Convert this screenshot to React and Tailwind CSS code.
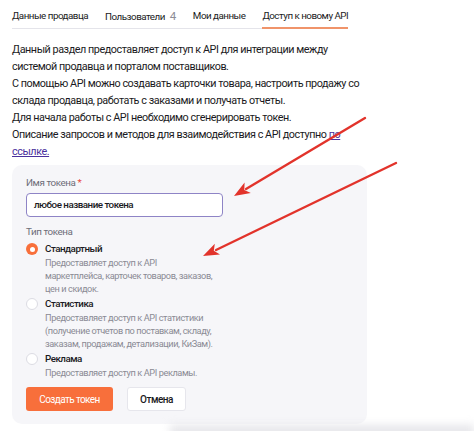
import React from 'react';

const tabs = [
  { label: 'Данные продавца' },
  { label: 'Пользователи', count: 4 },
  { label: 'Мои данные' },
  { label: 'Доступ к новому API', active: true },
];

const tokenTypes = [
  {
    title: 'Стандартный',
    lines: ['Предоставляет доступ к API', 'маркетплейса, карточек товаров, заказов,', 'цен и скидок.'],
    checked: true,
  },
  {
    title: 'Статистика',
    lines: ['Предоставляет доступ к API статистики', '(получение отчетов по поставкам, складу,', 'заказам, продажам, детализации, КиЗам).'],
  },
  {
    title: 'Реклама',
    lines: ['Предоставляет доступ к API рекламы.'],
  },
];

const Radio = ({ checked }) =>
  checked ? (
    <span className="flex h-[12px] w-[12px] shrink-0 items-center justify-center rounded-full bg-[#f86f3b]">
      <span className="block h-[5px] w-[5px] rounded-full bg-white" />
    </span>
  ) : (
    <span className="block h-[12px] w-[12px] shrink-0 rounded-full border border-[#dcdce3] bg-white" />
  );

const Arrows = () => (
  <svg className="pointer-events-none absolute inset-0" width="474" height="431" viewBox="0 0 474 431">
    <g stroke="#e2332b" strokeWidth="2.4" strokeLinecap="round">
      <line x1="365" y1="118" x2="246" y2="189" />
      <line x1="396" y1="163" x2="216" y2="250" />
    </g>
    <g fill="#e2332b">
      <polygon points="234,196 250.8,193 244.3,189.9 244.6,182.6" />
      <polygon points="203,256 220,254.5 213.8,250.8 214.8,243.7" />
    </g>
  </svg>
);

export default function App() {
  return (
    <div className="relative h-[431px] w-[474px] overflow-hidden bg-white px-3 font-['Roboto','Noto_Sans',sans-serif] text-[#1a1a22]">
      {/* Tabs */}
      <div className="inline-flex gap-[17px] border-b border-[#e4e4ea] pt-[8px] text-[9.8px] leading-[16px] tracking-[-0.5px]">
        {tabs.map((t) => (
          <div
            key={t.label}
            className={`pb-[3px] ${t.active ? '-mb-px border-b-2 border-[#f0946a]' : ''}`}
          >
            {t.label}
            {t.count != null && <span className="ml-[5px] text-[11.5px] text-[#8c8c96]">{t.count}</span>}
          </div>
        ))}
      </div>

      {/* Intro */}
      <p className="mt-[12px] text-[10.8px] leading-[17px] tracking-[-0.45px]">
        Данный раздел предоставляет доступ к API для интеграции между
        <br />
        системой продавца и порталом поставщиков.
        <br />
        С помощью API можно создавать карточки товара, настроить продажу со
        <br />
        склада продавца, работать с заказами и получать отчеты.
        <br />
        Для начала работы с API необходимо сгенерировать токен.
        <br />
        Описание запросов и методов для взаимодействия с API доступно{' '}
        <a className="text-[#4a2f9c] underline">по</a>
        <br />
        <a className="text-[#4a2f9c] underline">ссылке.</a>
      </p>

      {/* Card */}
      <div className="mt-[5px] w-[355px] rounded-[10px] bg-[#f6f6f9] px-[14px] pb-[13px] pt-[11px]">
        <div className="text-[9.8px] leading-[14px] tracking-[-0.4px] text-[#6d6d78]">
          Имя токена <span className="text-[#e8453c]">*</span>
        </div>
        <div className="mt-[3px] flex h-[24px] w-[197px] items-center rounded-[4px] border border-[#8e84c6] bg-white pl-[7px] text-[9.8px] font-medium tracking-[-0.5px]">
          любое название токена
        </div>

        <div className="mt-[8px] text-[9.8px] leading-[14px] tracking-[-0.4px] text-[#6d6d78]">Тип токена</div>

        <div className="mt-[3px] flex flex-col gap-[2px]">
          {tokenTypes.map((o) => (
            <div key={o.title} className="flex gap-[7px]">
              <div className="pt-[1px]">
                <Radio checked={o.checked} />
              </div>
              <div>
                <div className="text-[9.8px] font-medium leading-[14px] tracking-[-0.5px]">{o.title}</div>
                <div className="text-[9.2px] leading-[13px] tracking-[-0.4px] text-[#8a8a94]">
                  {o.lines.map((l) => (
                    <div key={l}>{l}</div>
                  ))}
                </div>
              </div>
            </div>
          ))}
        </div>

        <div className="mt-[8px] flex gap-[14px]">
          <button className="h-[24px] w-[87px] rounded-[3px] bg-[#f86f3b] text-[10px] tracking-[-0.6px] text-white">
            Создать токен
          </button>
          <button className="h-[24px] w-[59px] rounded-[3px] border border-[#e6e6ec] bg-white text-[10px] font-medium tracking-[-0.5px]">
            Отмена
          </button>
        </div>
      </div>

      {/* soft shadow under the card edge, as in the capture */}
      <div className="pointer-events-none absolute bottom-[-6px] left-[170px] right-0 h-[12px] bg-[#e6e6ea] blur-[4px]" />

      <Arrows />
    </div>
  );
}
